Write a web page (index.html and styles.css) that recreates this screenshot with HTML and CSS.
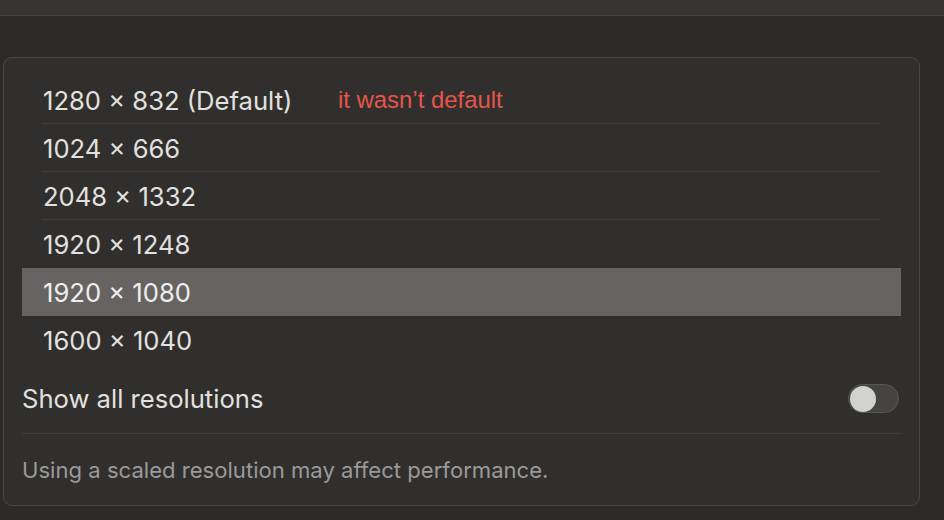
FILE: index.html
```html
<!doctype html>
<html lang="en">
<head>
	<meta charset="UTF-8">
	<title>Display resolution</title>
	<link rel="stylesheet" href="styles.css">
</head>
<body>
	<div class="topbar"></div>
	<div class="panel">
		<ul class="resList">
			<li class="sep"><span>1280 × 832 (Default)</span><em class="note">it wasn’t default</em></li>
			<li class="sep"><span>1024 × 666</span></li>
			<li class="sep"><span>2048 × 1332</span></li>
			<li><span>1920 × 1248</span></li>
			<li class="on"><span>1920 × 1080</span></li>
			<li><span>1600 × 1040</span></li>
		</ul>
		<div class="showAll">
			<span>Show all resolutions</span>
			<a href="javascript:;" class="toggle"><i></i></a>
		</div>
		<p class="hint">Using a scaled resolution may affect performance.</p>
	</div>
</body>
</html>
```

FILE: styles.css
```css
* { margin: 0; padding: 0; box-sizing: border-box;}
body { font-family: "Inter", "Liberation Sans", sans-serif; color: #e2e1df; background: #2c2b29;}
li { list-style: none;}
em { font-style: normal;}
.topbar { height: 16px; background: #363533; border-bottom: 1px solid #434240;}
.panel { width: 917px; height: 449px; margin: 41px 0 0 3px; padding: 18px 18px 0; background: #302f2d; border: 1px solid #474644; border-radius: 9px;}
.resList li { height: 48px; display: flex; align-items: center; padding: 0 20px;}
.resList li span { flex: 1; display: flex; align-items: center; height: 48px; padding-left: 1px; font-size: 25.6px;}
.resList li.sep span { border-bottom: 1px solid #403f3d; padding-top: 1px;}
.resList li.on { background: #656462;}
.resList li.on span { color: #efeeec;}
.resList li:first-child { position: relative;}
.resList .note { position: absolute; left: 316px; font-family: "Liberation Sans", sans-serif; font-size: 23.9px; color: #e5554b;}
.showAll { height: 70px; display: flex; align-items: center; justify-content: space-between; border-bottom: 1px solid #403f3d; font-size: 25.6px;}
.toggle { width: 51px; height: 29px; margin-right: 2px; border-radius: 15px; background: #454442; border: 1px solid #575654; display: flex; align-items: center; padding-left: 1px;}
.toggle i { width: 26px; height: 26px; border-radius: 50%; background: #d2d2d1;}
.hint { padding-top: 23px; font-size: 22.1px; color: #9b9a98;}
```
